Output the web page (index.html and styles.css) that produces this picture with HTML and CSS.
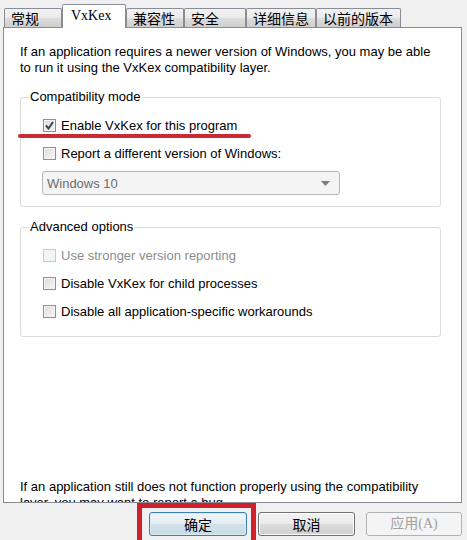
FILE: index.html
```html
<!DOCTYPE html>
<html lang="zh-CN">
<head>
    <meta charset="UTF-8">
    <title>VxKex</title>
    <link rel="stylesheet" href="styles.css">
</head>
<body>
    <div class="tabs">
        <div class="tab w58">常规</div>
        <div class="tab active w64">VxKex</div>
        <div class="tab w58">兼容性</div>
        <div class="tab w62">安全</div>
        <div class="tab w70">详细信息</div>
        <div class="tab w85">以前的版本</div>
    </div>
    <div class="panel">
        <p class="intro">If an application requires a newer version of Windows, you may be able to run it using the VxKex compatibility layer.</p>

        <fieldset class="group">
            <legend>Compatibility mode</legend>
            <label class="row"><span class="box checked"><svg width="9" height="9" viewBox="0 0 9 9"><path d="M1 4.5 L3.5 7.5 L8 1" fill="none" stroke="#3e4650" stroke-width="2"/></svg></span>Enable VxKex for this program</label>
            <label class="row"><span class="box"></span>Report a different version of Windows:</label>
            <div class="combo">
                <span>Windows 10</span>
                <svg width="9" height="5" viewBox="0 0 9 5"><path d="M0 0 H9 L4.5 5 Z" fill="#7d7d7d"/></svg>
            </div>
        </fieldset>

        <fieldset class="group second">
            <legend>Advanced options</legend>
            <label class="row disabled"><span class="box"></span>Use stronger version reporting</label>
            <label class="row"><span class="box"></span>Disable VxKex for child processes</label>
            <label class="row"><span class="box"></span>Disable all application-specific workarounds</label>
        </fieldset>

        <p class="note">If an application still does not function properly using the compatibility layer, you may want to report a bug.</p>
    </div>
    <div class="buttons">
        <button class="btn default">确定</button>
        <button class="btn">取消</button>
        <button class="btn off">应用(A)</button>
    </div>

    <div class="mark-line"></div>
    <div class="mark-box"></div>
</body>
</html>
```

FILE: styles.css
```css
html, body {
    margin: 0; padding: 0;
    width: 467px; height: 540px;
    overflow: hidden;
    background: #f0f0f0;
    font-family: "Liberation Sans", Arial, sans-serif;
    font-size: 13px; color: #000;
}
.tabs {
    display: flex; align-items: flex-end;
    height: 24px; padding: 4px 0 0 4px;
    margin-bottom: -1px;
    position: relative; z-index: 1;
}
.tab {
    box-sizing: border-box;
    height: 19px; margin-bottom: 1px;
    border: 1px solid #898c95; border-bottom: 0;
    border-radius: 2px 2px 0 0;
    background: linear-gradient(#f2f2f2, #ebebeb 50%, #dddddd 50%, #cfcfcf);
    font-family: "Noto Sans CJK SC", sans-serif;
    font-size: 14px; line-height: 19px;
    padding-left: 6px;
    white-space: nowrap;
}
.tab.active {
    height: 24px; margin-bottom: 0;
    background: #fff;
    font-family: "Liberation Serif", serif;
    font-size: 14px; line-height: 22px;
    padding-left: 8px;
}
.w58 {width: 58px;}
.w62 {width: 62px;}
.w64 {width: 64px;}
.w70 {width: 70px;}
.w85 {width: 85px;}

.panel {
    box-sizing: border-box;
    height: 476px;
    margin: 0 5px 0 3px;
    border: 1px solid #898c95;
    background: #fff;
    display: flex; flex-direction: column;
    overflow: hidden;
}
.intro {
    margin: 16px 22px 0 16px;
    line-height: 16px;
}
.group {
    margin: 13px 20px 0 16px;
    padding: 6px 10px 11px 22px;
    border: 1px solid #dcdcdc;
    border-radius: 3px;
}
.group.second {margin-top: 12px;}
.group legend {
    padding: 0 1px; margin-left: -14px;
    line-height: 16px;
}
.row {
    display: flex; align-items: center;
    height: 28px;
    white-space: nowrap;
}
.box {
    box-sizing: border-box;
    width: 13px; height: 13px;
    margin-right: 5px;
    border: 1px solid #8e8f8f;
    background: linear-gradient(135deg, #dcdcdc, #f6f6f6);
    box-shadow: inset 0 0 0 1px #f4f4f4;
    display: flex; align-items: center; justify-content: center;
}
.row.disabled {color: #8d8d8d;}
.row.disabled .box {
    border-color: #c9c9c9;
    background: #f4f4f4;
}
.combo {
    box-sizing: border-box;
    width: 298px; height: 24px;
    margin: 4px 0 0 -1px;
    border: 1px solid #b4b7ba;
    border-radius: 3px;
    background: #f4f4f4;
    color: #6d6d6d;
    display: flex; align-items: center; justify-content: space-between;
    padding: 0 9px 0 4px;
}
.note {
    margin: auto 22px -9px 16px;
    line-height: 16px;
}

.buttons {
    display: flex; justify-content: flex-end;
    gap: 11px;
    padding: 9px 5px 0 0;
}
.btn {
    box-sizing: border-box;
    width: 97px; height: 24px;
    border: 1px solid #707070;
    border-radius: 3px;
    background: linear-gradient(#f2f2f2, #ebebeb 50%, #dddddd 50%, #cfcfcf);
    box-shadow: inset 0 0 0 1px #fcfcfc;
    font-family: "Noto Sans CJK SC", sans-serif;
    font-size: 14px; line-height: 20px;
    padding: 0; color: #000;
}
.btn.default {
    width: 98px;
    border-color: #3c7fb1;
    background: linear-gradient(#f0f5f8, #e3edf2 50%, #d3e2ea 50%, #cadbe4);
    box-shadow: inset 0 0 0 1px #d8eaf5;
}
.btn.off {
    width: 96px;
    border-color: #adb2b5;
    background: #f4f4f4;
    box-shadow: none;
    color: #a0a0a0;
    font-family: "Liberation Serif", "Noto Sans CJK SC", serif;
}

.mark-line {
    position: absolute; left: 18px; top: 134px;
    width: 233px; height: 4px;
    border-radius: 2px;
    background: #c92a33;
}
.mark-box {
    position: absolute; left: 137px; top: 503px;
    width: 119px; height: 45px;
    box-sizing: border-box;
    border: 5px solid #d0202a;
}
```
